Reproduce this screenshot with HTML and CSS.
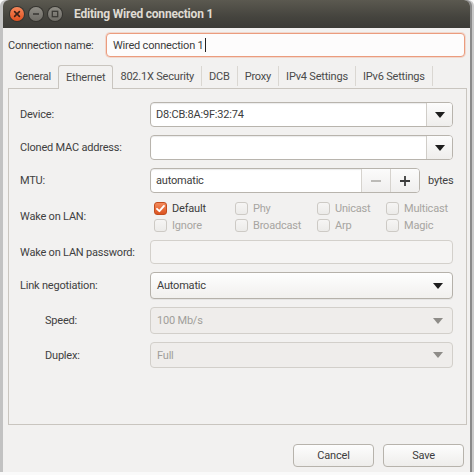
FILE: index.html
```html
<!DOCTYPE html>
<html>
<head>
<meta charset="utf-8">
<link rel="stylesheet" href="styles.css">
</head>
<body>
<div class="window">
  <div class="titlebar">
    <span class="wbtn close"><svg width="14" height="14" viewBox="0 0 14 14"><path d="M4.6 4.6 L9.4 9.4 M9.4 4.6 L4.6 9.4" stroke="#3a2118" stroke-width="1.6" stroke-linecap="round"/></svg></span>
    <span class="wbtn"><svg width="14" height="14" viewBox="0 0 14 14"><path d="M4 7 H10" stroke="#3b3a36" stroke-width="1.6"/></svg></span>
    <span class="wbtn"><svg width="14" height="14" viewBox="0 0 14 14"><rect x="4.3" y="4.3" width="5.4" height="5.4" fill="none" stroke="#3b3a36" stroke-width="1.3"/></svg></span>
    <span class="title">Editing Wired connection 1</span>
  </div>
  <div class="content">
    <div class="name-row">
      <span class="name-label">Connection name:</span>
      <div class="entry focus">Wired connection 1<span class="caret"></span></div>
    </div>
    <div class="notebook">
      <div class="tabs">
        <span class="tab">General</span>
        <span class="tab active">Ethernet</span>
        <span class="tab sep">802.1X Security</span>
        <span class="tab sep">DCB</span>
        <span class="tab sep">Proxy</span>
        <span class="tab sep">IPv4 Settings</span>
        <span class="tab sep">IPv6 Settings</span>
      </div>
      <div class="panel">
        <div class="form">
          <span class="lbl">Device:</span>
          <div class="combo-entry">
            <span class="ce-text">D8:CB:8A:9F:32:74</span>
            <span class="ce-btn"><span class="arrow"></span></span>
          </div>

          <span class="lbl">Cloned MAC address:</span>
          <div class="combo-entry">
            <span class="ce-text"></span>
            <span class="ce-btn"><span class="arrow"></span></span>
          </div>

          <span class="lbl">MTU:</span>
          <div class="mtu">
            <div class="spin">
              <span class="ce-text">automatic</span>
              <span class="sp-btn minus"><svg width="12" height="12" viewBox="0 0 12 12"><path d="M1 6 H11" stroke="#a9a7a3" stroke-width="1.6"/></svg></span>
              <span class="sp-btn plus"><svg width="12" height="12" viewBox="0 0 12 12"><path d="M1 6 H11 M6 1 V11" stroke="#3c3c3c" stroke-width="1.8"/></svg></span>
            </div>
            <span class="bytes">bytes</span>
          </div>

          <span class="lbl">Wake on LAN:</span>
          <div class="checks">
            <span class="chk"><span class="box checked"><svg width="13" height="13" viewBox="0 0 13 13"><path d="M3 6.8 L5.4 9.2 L10 3.9" fill="none" stroke="#fff" stroke-width="1.9" stroke-linecap="round" stroke-linejoin="round"/></svg></span><span class="ctext on">Default</span></span>
            <span class="chk"><span class="box"></span><span class="ctext">Phy</span></span>
            <span class="chk"><span class="box"></span><span class="ctext">Unicast</span></span>
            <span class="chk"><span class="box"></span><span class="ctext">Multicast</span></span>
            <span class="chk"><span class="box"></span><span class="ctext">Ignore</span></span>
            <span class="chk"><span class="box"></span><span class="ctext">Broadcast</span></span>
            <span class="chk"><span class="box"></span><span class="ctext">Arp</span></span>
            <span class="chk"><span class="box"></span><span class="ctext">Magic</span></span>
          </div>

          <span class="lbl">Wake on LAN password:</span>
          <div class="entry disabled"></div>

          <span class="lbl">Link negotiation:</span>
          <div class="combo"><span>Automatic</span><span class="arrow"></span></div>

          <span class="lbl indent">Speed:</span>
          <div class="combo dis"><span>100 Mb/s</span><span class="arrow"></span></div>

          <span class="lbl indent">Duplex:</span>
          <div class="combo dis"><span>Full</span><span class="arrow"></span></div>
        </div>
      </div>
    </div>
    <div class="buttons">
      <span class="btn">Cancel</span>
      <span class="btn">Save</span>
    </div>
  </div>
</div>
</body>
</html>
```

FILE: styles.css
```css
* { box-sizing: border-box; }
body {
  margin: 0;
  width: 474px;
  height: 475px;
  overflow: hidden;
  background: #fafafa;
  font-family: Roboto, "Noto Sans", sans-serif;
  font-size: 11px;
  letter-spacing: -0.2px;
  color: #3c3c3c;
}
.window {
  margin-left: 3px;
  width: 467px;
  height: 472px;
  background: #f2f1f0;
  border-radius: 6px 6px 0 0;
  box-shadow: -3px 0 0 #c2c2c2, 2px 0 0 #8a8a8a, 4px 0 0 #c9c9c9;
  display: flex;
  flex-direction: column;
}
.titlebar {
  height: 28px;
  flex: none;
  border-radius: 6px 6px 0 0;
  background: linear-gradient(#5b5950, #45443e 60%, #3c3b37);
  display: flex;
  align-items: center;
  padding-left: 7px;
  gap: 5px;
}
.wbtn {
  width: 14px;
  height: 14px;
  border-radius: 50%;
  background: linear-gradient(#8f8d86, #6d6b65);
  box-shadow: 0 0 0 1px #34332f;
  display: flex;
}
.wbtn.close {
  background: linear-gradient(#f7875a, #e0501f);
}
.title {
  margin-left: 7px;
  color: #dfdbd2;
  font-weight: bold;
  font-size: 12px;
}
.content {
  flex: 1;
  display: flex;
  flex-direction: column;
  padding: 5px 3px 0 5px;
}
.name-row {
  display: flex;
  align-items: center;
  height: 24px;
}
.name-label {
  width: 98px;
  flex: none;
}
.entry {
  flex: 1;
  height: 100%;
  border: 1px solid #b8b4ad;
  border-radius: 4px;
  background: #fff;
  display: flex;
  align-items: center;
  padding-left: 6px;
  box-shadow: inset 0 1px 1px rgba(0,0,0,0.08);
}
.entry.focus {
  margin-right: 2px;
  border-color: #eb9c7e;
  box-shadow: 0 0 0 1px rgba(240,160,130,0.3);
  background: #fdfcfc;
}
.caret {
  display: inline-block;
  width: 1px;
  height: 14px;
  background: #222;
  margin-left: 1px;
}
.entry.disabled {
  background: #f5f4f3;
  border-color: #d3d0cb;
  box-shadow: none;
}
.notebook {
  margin-top: 6px;
  display: flex;
  flex-direction: column;
}
.tabs {
  display: flex;
  height: 25px;
  align-items: flex-end;
}
.tab {
  height: 23px;
  padding: 0 7px;
  display: flex;
  align-items: center;
  padding-bottom: 1px;
  color: #4a4a4a;
  position: relative;
}
.tab.sep {
  border-right: 1px solid #dad7d2;
  height: 20px;
  margin-bottom: 2px;
  padding-bottom: 0;
}
.tab.active {
  border: 1px solid #c9c5bf;
  border-bottom: none;
  background: #f2f1f0;
  border-radius: 3px 3px 0 0;
  margin-bottom: -1px;
  height: 24px;
  z-index: 1;
}
.panel {
  border: 1px solid #c9c5bf;
  height: 337px;
  padding: 13px 15px 0 11px;
  background: #f2f1f0;
}
.form {
  display: grid;
  grid-template-columns: 130px 1fr;
  grid-template-rows: 25px 25px 25px 31px 24px 27px 27px 26px;
  row-gap: 8px;
}
.lbl {
  align-self: center;
  color: #3f3f3f;
}
.lbl.indent { padding-left: 25px; }
.combo-entry, .spin {
  display: flex;
  border: 1px solid #b8b4ad;
  border-radius: 4px;
  background: #fff;
  box-shadow: inset 0 1px 1px rgba(0,0,0,0.08);
  overflow: hidden;
}
.ce-text {
  flex: 1;
  display: flex;
  align-items: center;
  padding-left: 5px;
}
.ce-btn {
  width: 26px;
  border-left: 1px solid #d0cdc8;
  background: linear-gradient(#fcfcfc, #efeeec);
  display: flex;
  align-items: center;
  justify-content: center;
}
.arrow {
  width: 0;
  height: 0;
  border-left: 5px solid transparent;
  border-right: 5px solid transparent;
  border-top: 6px solid #1e1e1e;
}
.mtu {
  display: flex;
  align-items: center;
  gap: 8px;
}
.spin {
  width: 270px;
  height: 100%;
}
.sp-btn {
  width: 29px;
  border-left: 1px solid #d6d3ce;
  background: linear-gradient(#fbfbfb, #f0efee);
  display: flex;
  align-items: center;
  justify-content: center;
}
.bytes { color: #3f3f3f; }
.checks {
  display: grid;
  grid-template-columns: 81px 82px 69px auto;
  grid-template-rows: 15px 15px;
  row-gap: 2px;
  padding-left: 4px;
  align-content: center;
}
.chk {
  display: flex;
  align-items: center;
  gap: 5px;
}
.box {
  width: 13px;
  height: 13px;
  border: 1px solid #cdcac5;
  border-radius: 3px;
  background: linear-gradient(#f6f5f4, #ecebe9);
  display: flex;
  flex: none;
}
.box.checked {
  border-color: #c24d1e;
  background: linear-gradient(#f38a5c, #dc5421);
}
.box.checked svg { margin: -1px; }
.ctext { color: #a7a5a1; }
.ctext.on { color: #3c3c3c; }
.combo {
  display: flex;
  align-items: center;
  justify-content: space-between;
  padding: 0 9px 0 6px;
  border: 1px solid #b5b1aa;
  border-radius: 4px;
  background: linear-gradient(#fefefe, #f1f0ee);
  box-shadow: 0 1px 0 rgba(0,0,0,0.05);
}
.combo.dis {
  background: #efedeb;
  border-color: #d2cfca;
  color: #a09e9a;
  box-shadow: none;
}
.combo.dis .arrow { border-top-color: #8e8c88; }
.buttons {
  margin-top: 19px;
  display: flex;
  justify-content: flex-end;
  gap: 9px;
  padding-right: 3px;
}
.btn {
  width: 81px;
  height: 23px;
  border: 1px solid #b7b3ac;
  border-radius: 4px;
  background: linear-gradient(#fdfdfd, #eeedeb);
  display: flex;
  align-items: center;
  justify-content: center;
  color: #3c3c3c;
}
```
